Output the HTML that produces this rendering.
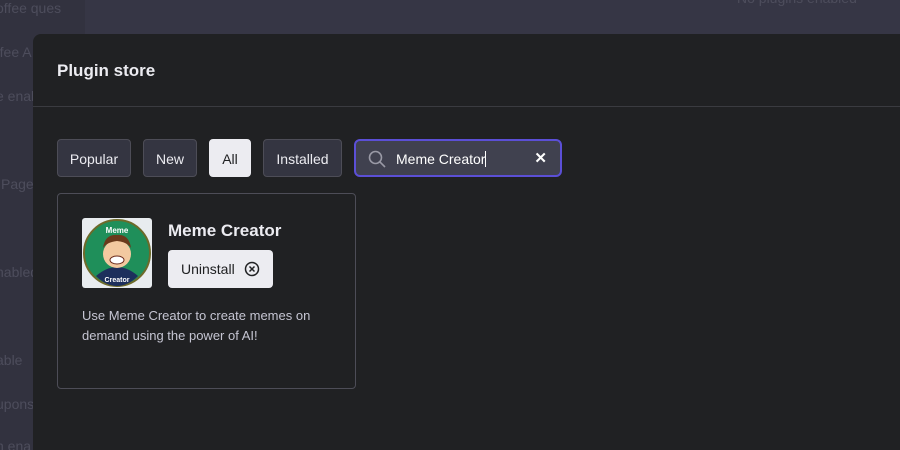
<!DOCTYPE html>
<html><head><style>
html,body{margin:0;width:900px;height:450px;overflow:hidden}
body{background:#363645;font-family:"Liberation Sans",sans-serif;position:relative}
.side{position:absolute;left:0;top:0;width:85px;height:450px;background:#32323f}
.bg{position:absolute;color:#4d4d5c;font-size:14px;white-space:nowrap}
.modal{position:absolute;left:33px;top:34px;width:880px;height:416px;background:#202123;border-radius:8px 0 0 0;overflow:hidden}
.title{position:absolute;left:24px;top:27px;color:#ececf1;font-size:17px;font-weight:bold}
.hr{position:absolute;left:0;top:72px;right:0;height:1px;background:#3a3b40}
.tab{position:absolute;top:105px;height:38px;box-sizing:border-box;border:1px solid #4d4d57;border-radius:4px;background:#343541;color:#ececf1;font-size:14px;line-height:38px;text-align:center}
.card{position:absolute;left:24px;top:159px;width:299px;height:196px;box-sizing:border-box;border:1px solid #4d4d57;border-radius:4px}
</style></head><body>
<div class="side"></div>
<div class="bg" style="left:-4px;top:0px">offee ques</div>
<div class="bg" style="left:-4px;top:44px">ffee A</div>
<div class="bg" style="left:-4px;top:88px">e enab</div>
<div class="bg" style="left:1px;top:176px">Page</div>
<div class="bg" style="left:-4px;top:264px">nabled</div>
<div class="bg" style="left:-4px;top:352px">able</div>
<div class="bg" style="left:-4px;top:396px">upons</div>
<div class="bg" style="left:-4px;top:438px">n ena</div>
<div class="bg" style="left:737px;top:-10px">No plugins enabled</div>
<div class="modal">
<div class="title">Plugin store</div>
<div class="hr"></div>
<div class="tab" style="left:24px;width:74px">Popular</div>
<div class="tab" style="left:110px;width:54px">New</div>
<div class="tab" style="left:176px;width:42px;background:#ececf1;color:#202123;border-color:#ececf1">All</div>
<div class="tab" style="left:230px;width:79px">Installed</div>
<div class="tab" style="left:321px;width:208px;border:2px solid #5b4fd6;border-radius:6px;background:#40414f;text-align:left">
<svg style="position:absolute;left:12px;top:9px" width="18" height="18" viewBox="0 0 18 18"><circle cx="7.5" cy="7.5" r="6" fill="none" stroke="#9a9aa6" stroke-width="1.6"/><path d="M12 12l5 5" stroke="#9a9aa6" stroke-width="1.6"/></svg>
<span style="position:absolute;left:40px;top:0px;line-height:36px;color:#fff">Meme Creator<span style="display:inline-block;width:1px;height:16px;background:#fff;vertical-align:-3px"></span></span>
<span style="position:absolute;right:13px;top:0px;line-height:36px;color:#fff;font-weight:bold;font-size:15px">✕</span>
</div>
<div class="card">
<div style="position:absolute;left:24px;top:24px;width:70px;height:70px;background:#e8ecef;border-radius:3px">
<svg width="70" height="70" viewBox="0 0 70 70"><circle cx="35" cy="35" r="33" fill="#1f8f5a" stroke="#6d6a2a" stroke-width="2"/><path d="M14 58q21-18 42 0q-10 10-21 10t-21-10z" fill="#1d2f5c"/><circle cx="35" cy="36" r="14" fill="#f2c9a0"/><path d="M21 30q2-14 14-13q12-1 14 13q-4-6-14-7q-10 1-14 7z" fill="#6a3a1c"/><ellipse cx="35" cy="42" rx="7" ry="4" fill="#fff" stroke="#6b2a1a"/><text x="35" y="15" font-size="8" fill="#fff" text-anchor="middle" font-weight="bold" font-family="Liberation Sans">Meme</text><text x="35" y="64" font-size="7" fill="#fff" text-anchor="middle" font-weight="bold" font-family="Liberation Sans">Creator</text></svg>
</div>
<div style="position:absolute;left:110px;top:27px;color:#ececf1;font-size:17px;font-weight:bold">Meme Creator</div>
<div style="position:absolute;left:110px;top:56px;width:105px;height:38px;background:#ececf1;border-radius:4px;color:#202123;font-size:14px;line-height:38px;padding-left:13px;box-sizing:border-box">Uninstall
<svg style="position:absolute;left:76px;top:11px" width="16" height="16" viewBox="0 0 16 16"><circle cx="8" cy="8" r="6.5" fill="none" stroke="#202123" stroke-width="1.5"/><path d="M5.5 5.5l5 5M10.5 5.5l-5 5" stroke="#202123" stroke-width="1.5"/></svg></div>
<div style="position:absolute;left:24px;top:112px;width:260px;color:#c5c5d2;font-size:13px;line-height:20px">Use Meme Creator to create memes on demand using the power of AI!</div>
</div>
</div>
</body></html>
